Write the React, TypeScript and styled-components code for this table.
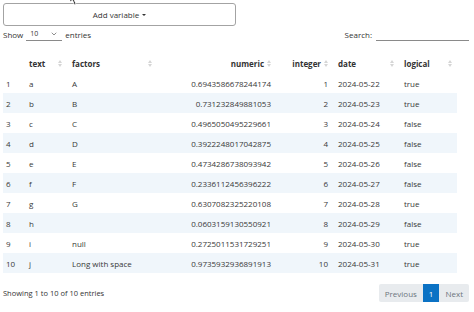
import React from "react";
import styled, { createGlobalStyle } from "styled-components";
import { ChevronDown } from "lucide-react";

const GlobalStyle = createGlobalStyle`
  body {
    margin: 0;
    background: #fff;
    font-family: "Open Sans", "Liberation Sans", sans-serif;
    font-size: 8px;
    color: #383838;
  }
`;

const Page = styled.div`
  position: relative;
  width: 466px;
  padding: 3px;
`;

const Cursor = styled.svg`
  position: absolute;
  left: 69px;
  top: -8px;
`;

const AddButton = styled.button`
  display: flex;
  align-items: center;
  justify-content: center;
  width: 233px;
  height: 23px;
  padding: 0;
  background: #fff;
  border: 1px solid #a3a3a3;
  border-radius: 3px;
  font-family: inherit;
  font-size: 8px;
  color: #333;
`;

const Caret = styled.span`
  display: inline-block;
  margin-left: 3px;
  border-top: 2.5px solid #333;
  border-left: 2px solid transparent;
  border-right: 2px solid transparent;
`;

const Controls = styled.div`
  display: flex;
  align-items: center;
  justify-content: space-between;
  height: 16px;
`;

const Label = styled.label`
  display: flex;
  align-items: center;
  gap: 3px;
  color: #333;
`;

const SelectBox = styled.div`
  display: flex;
  align-items: center;
  justify-content: space-between;
  width: 28px;
  height: 13px;
  padding: 0 4px 0 4px;
  border-bottom: 1px solid #8a8a8a;
`;

const Select = styled.select`
  appearance: none;
  border: none;
  background: transparent;
  padding: 0;
  font-family: inherit;
  font-size: 7px;
  color: #333;
  outline: none;
`;

const SearchInput = styled.input`
  width: 93px;
  height: 13px;
  margin-left: 1px;
  padding: 0;
  border: none;
  border-bottom: 1px solid #8a8a8a;
  outline: none;
`;

const Table = styled.table`
  width: 454px;
  margin-top: 11px;
  border-collapse: collapse;
  table-layout: fixed;
`;

const Th = styled.th<{ $right?: boolean }>`
  height: 20px;
  padding: 0 5px;
  font-weight: 700;
  color: #333;
  text-align: ${(p) => (p.$right ? "right" : "left")};
`;

const HeadInner = styled.div<{ $right?: boolean }>`
  display: flex;
  align-items: center;
  justify-content: ${(p) => (p.$right ? "flex-end" : "space-between")};
  gap: 3px;
`;

const Row = styled.tr<{ $striped: boolean }>`
  background: ${(p) => (p.$striped ? "#f0f6fb" : "transparent")};
`;

const Td = styled.td<{ $right?: boolean; $index?: boolean }>`
  height: 20px;
  padding: ${(p) => (p.$index ? "0 5px 0 3px" : "0 5px")};
  white-space: nowrap;
  overflow: hidden;
  text-align: ${(p) => (p.$right ? "right" : "left")};
`;

const Footer = styled.div`
  display: flex;
  align-items: center;
  justify-content: space-between;
  margin-top: 11px;
`;

const Info = styled.div`
  font-size: 7.5px;
  color: #333;
`;

const Pager = styled.div`
  display: flex;
`;

const PageButton = styled.button<{ $active?: boolean; $first?: boolean; $last?: boolean }>`
  height: 18px;
  padding: 0 6px;
  border: none;
  font-family: inherit;
  font-size: 8px;
  background: ${(p) => (p.$active ? "#0b72c4" : "#e8ebee")};
  color: ${(p) => (p.$active ? "#fff" : "#6c757d")};
  border-radius: ${(p) => (p.$first ? "2px 0 0 2px" : p.$last ? "0 2px 2px 0" : "0")};
`;

const SortIcon = () => (
  <svg width="4" height="7" viewBox="0 0 4 7">
    <path d="M2 0 L4 3 L0 3 Z" fill="#d6d6d6" />
    <path d="M0 4 L4 4 L2 7 Z" fill="#d6d6d6" />
  </svg>
);

const columns = [
  { key: "text", label: "text", width: 43 },
  { key: "factors", label: "factors", width: 90 },
  { key: "numeric", label: "numeric", width: 119, right: true },
  { key: "integer", label: "integer", width: 57, right: true },
  { key: "date", label: "date", width: 66 },
  { key: "logical", label: "logical", width: 58 },
];

const rows = [
  ["a", "A", "0.6943586678244174", "1", "2024-05-22", "true"],
  ["b", "B", "0.731232849881053", "2", "2024-05-23", "true"],
  ["c", "C", "0.4965050495229661", "3", "2024-05-24", "false"],
  ["d", "D", "0.3922248017042875", "4", "2024-05-25", "false"],
  ["e", "E", "0.4734286738093942", "5", "2024-05-26", "false"],
  ["f", "F", "0.2336112456396222", "6", "2024-05-27", "false"],
  ["g", "G", "0.6307082325220108", "7", "2024-05-28", "true"],
  ["h", "", "0.0603159130550921", "8", "2024-05-29", "false"],
  ["i", "null", "0.2725011531729251", "9", "2024-05-30", "true"],
  ["j", "Long with space", "0.9735932936891913", "10", "2024-05-31", "true"],
];

export default function App() {
  return (
    <>
      <GlobalStyle />
      <Page>
        <AddButton>
          Add variable
          <Caret />
        </AddButton>
        <Controls>
          <Label>
            Show
            <SelectBox>
              <Select defaultValue="10">
                <option value="10">10</option>
                <option value="25">25</option>
              </Select>
              <ChevronDown size={8} strokeWidth={2} color="#555" />
            </SelectBox>
            entries
          </Label>
          <Label>
            Search:
            <SearchInput type="search" />
          </Label>
        </Controls>
        <Table>
          <colgroup>
            <col style={{ width: 21 }} />
            {columns.map((c) => (
              <col key={c.key} style={{ width: c.width }} />
            ))}
          </colgroup>
          <thead>
            <tr>
              <Th />
              {columns.map((c) => (
                <Th key={c.key} $right={c.right}>
                  <HeadInner $right={c.right}>
                    <span>{c.label}</span>
                    <SortIcon />
                  </HeadInner>
                </Th>
              ))}
            </tr>
          </thead>
          <tbody>
            {rows.map((r, i) => (
              <Row key={i} $striped={i % 2 === 1}>
                <Td $index>{i + 1}</Td>
                {r.map((v, j) => (
                  <Td key={j} $right={columns[j].right}>
                    {v}
                  </Td>
                ))}
              </Row>
            ))}
          </tbody>
        </Table>
        <Footer>
          <Info>Showing 1 to 10 of 10 entries</Info>
          <Pager>
            <PageButton $first>Previous</PageButton>
            <PageButton $active>1</PageButton>
            <PageButton $last>Next</PageButton>
          </Pager>
        </Footer>
        <Cursor width="10" height="14" viewBox="0 0 10 14">
          <path d="M1 0 L1 10 L3.5 8 L5.5 13 L7 12.3 L5 7.5 L8.5 7.5 Z" fill="#111" stroke="#fff" strokeWidth="0.8" />
        </Cursor>
      </Page>
    </>
  );
}
